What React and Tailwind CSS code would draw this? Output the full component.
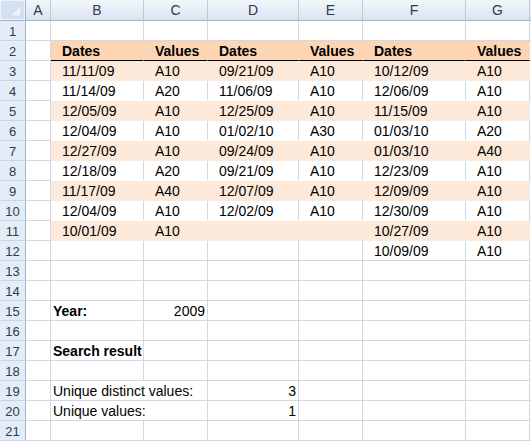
import React from "react";

const COLS = ["A", "B", "C", "D", "E", "F", "G"];

// rows 2..12, columns B..G
const TABLE = {
  2: ["Dates", "Values", "Dates", "Values", "Dates", "Values"],
  3: ["11/11/09", "A10", "09/21/09", "A10", "10/12/09", "A10"],
  4: ["11/14/09", "A20", "11/06/09", "A10", "12/06/09", "A10"],
  5: ["12/05/09", "A10", "12/25/09", "A10", "11/15/09", "A10"],
  6: ["12/04/09", "A10", "01/02/10", "A30", "01/03/10", "A20"],
  7: ["12/27/09", "A10", "09/24/09", "A10", "01/03/10", "A40"],
  8: ["12/18/09", "A20", "09/21/09", "A10", "12/23/09", "A10"],
  9: ["11/17/09", "A40", "12/07/09", "A10", "12/09/09", "A10"],
  10: ["12/04/09", "A10", "12/02/09", "A10", "12/30/09", "A10"],
  11: ["10/01/09", "A10", "", "", "10/27/09", "A10"],
  12: ["", "", "", "", "10/09/09", "A10"],
};

function cellClass(r, ci) {
  const inTable = ci >= 1 && r >= 2 && r <= 11;
  if (inTable && r === 2)
    return "bg-[#fcd5b4] border-r border-b border-r-[#fcd5b4] border-b-black";
  if (inTable && r % 2 === 1)
    return "bg-[#fde9d9] border-r border-b border-[#fde9d9]";
  if (inTable) return "bg-white border-r border-b border-r-[#d0d7e5] border-b-white";
  return "bg-white border-r border-b border-[#d0d7e5]";
}

function RowHeader({ n }) {
  return (
    <div className="flex items-center justify-center pt-[2px] bg-[#e4ecf7] border-r border-b border-r-[#9eb6ce] border-b-[#c5d5ea] text-[13px] text-[#2e3a4d]">
      {n}
    </div>
  );
}

function Cell({ r, ci }) {
  let text = "";
  let extra = "pl-[11px]";
  if (TABLE[r] && ci >= 1) text = TABLE[r][ci - 1];
  if (r === 15 && ci === 1) text = "Year:";
  if (r === 17 && ci === 1) text = "Search result";
  if ((r === 15 || r === 17) && ci === 1) extra = "pl-[2px] font-bold text-[13px]";
  if (r === 15 && ci === 2) {
    text = "2009";
    extra = "justify-end pr-[2px]";
  }
  if (r === 19 && ci === 3) {
    text = "3";
    extra = "justify-end pr-[2px]";
  }
  if (r === 20 && ci === 3) {
    text = "1";
    extra = "justify-end pr-[2px]";
  }
  if (r === 2) extra = "pl-[11px] font-bold text-[13px]";

  return (
    <div className={`flex items-center pt-[2px] whitespace-nowrap overflow-hidden text-[14px] text-black ${cellClass(r, ci)} ${extra}`}>
      {text}
    </div>
  );
}

function Row({ r }) {
  const cells = [];
  for (let ci = 0; ci < COLS.length; ci++) {
    if ((r === 19 || r === 20) && ci === 1) {
      cells.push(
        <div
          key="span"
          className="col-span-2 flex items-center pt-[2px] pl-[2px] whitespace-nowrap text-[14px] text-black bg-white border-r border-b border-[#d0d7e5]"
        >
          {r === 19 ? "Unique distinct values:" : "Unique values:"}
        </div>
      );
      ci++;
      continue;
    }
    cells.push(<Cell key={ci} r={r} ci={ci} />);
  }
  return (
    <>
      <RowHeader n={r} />
      {cells}
      <div className="bg-white border-b border-[#d0d7e5]" />
    </>
  );
}

export default function App() {
  const rows = Array.from({ length: 21 }, (_, i) => i + 1);
  return (
    <div
      className="w-[531px] h-[441px] overflow-hidden bg-white"
      style={{ fontFamily: '"Liberation Sans", Arial, sans-serif' }}
    >
      <div className="grid grid-cols-[26px_25px_93px_64px_91px_64px_103px_64px_1fr] grid-rows-[21px] auto-rows-[20px]">
        {/* corner */}
        <div className="relative bg-[#d5e1f0] border-r border-b border-[#9eb6ce]">
          <svg className="absolute inset-0" width="25" height="20" viewBox="0 0 25 20">
            <rect x="0.5" y="0.5" width="24" height="19" fill="none" stroke="#eef3fa" />
            <polygon points="21,5 21,16 10,16" fill="#eef2f7" stroke="#b7c7db" strokeWidth="0.5" />
          </svg>
        </div>
        {COLS.map((c) => (
          <div
            key={c}
            className="flex items-center justify-center pt-[1px] bg-gradient-to-b from-[#f3f7fc] to-[#d9e4f2] border-r border-b border-r-[#b8cce4] border-b-[#9eb6ce] text-[14px] text-[#2e3a4d]"
          >
            {c}
          </div>
        ))}
        <div className="bg-gradient-to-b from-[#f3f7fc] to-[#d9e4f2] border-b border-[#9eb6ce]" />
        {rows.map((r) => (
          <Row key={r} r={r} />
        ))}
      </div>
    </div>
  );
}
